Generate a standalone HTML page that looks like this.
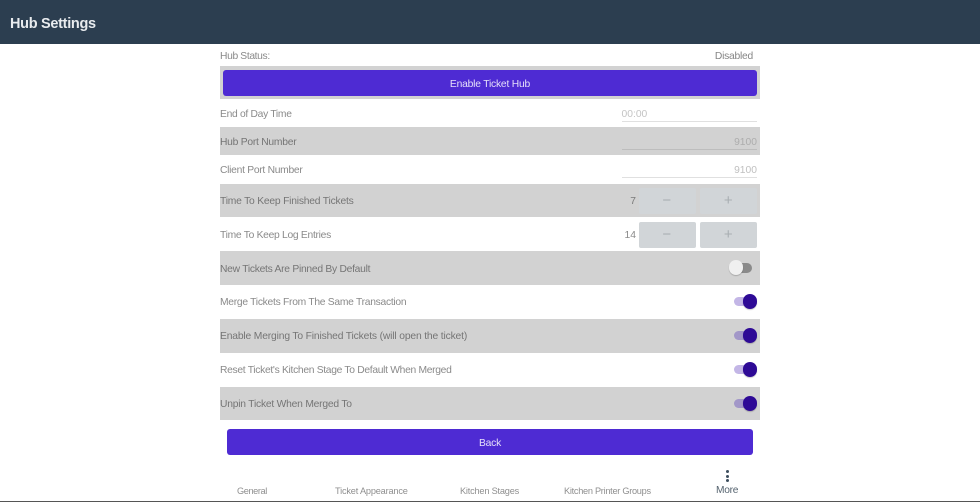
<!DOCTYPE html>
<html><head><meta charset="utf-8">
<style>
html,body{margin:0;padding:0;width:980px;height:502px;overflow:hidden;background:#fff}
body{position:relative;font-family:"Liberation Sans",sans-serif}
#w{position:absolute;left:0;top:0;width:980px;height:502px;filter:blur(.35px)}
#w div{position:absolute;box-sizing:border-box}
.hd{left:0;top:0;width:980px;height:44.3px;background:#2c3e50}
.ttl{left:10px;top:15.2px;font-size:14.5px;line-height:18px;font-weight:bold;color:#e8ebee;letter-spacing:-.3px;white-space:nowrap}
.g{left:219.5px;width:540px;background:#d2d2d2}
.t{font-size:10.3px;line-height:14px;color:#8a8a8a;white-space:nowrap;left:220px;margin-top:1px;letter-spacing:-.27px}
.gt{color:#757575}
.r{text-align:right;white-space:nowrap;font-size:10.3px;line-height:14px;margin-top:1px}
.btn{background:#4e2bd3;border-radius:3px;color:#e6e0fa;text-align:center;font-size:10.3px;letter-spacing:-.2px}
.ln{height:1px;background:#e0e0e0;left:621.5px;width:135.5px}
.st{background:#d1d5d8;border-radius:2px;width:57px;height:26px;top:0}
.sym{color:#a9aeb2;font-size:15px;line-height:26px;text-align:center;width:56.5px;height:26px}
.tr{width:18px;height:9.5px;border-radius:5px;left:734px}
.k{width:14.5px;height:14.5px;border-radius:50%;left:742.5px;background:#2e0a96;box-shadow:0 1px 1px rgba(0,0,0,.2)}
.tab{font-size:9.2px;line-height:12px;color:#8f8f8f;top:485px;white-space:nowrap;letter-spacing:-.22px}
</style></head><body><div id="w">
<div class="hd"></div>
<div class="ttl">Hub Settings</div>

<div class="t" style="top:49px;letter-spacing:-.36px">Hub Status:</div>
<div class="r" style="top:49px;left:653px;width:100px;color:#858585;letter-spacing:-.25px">Disabled</div>

<div class="g" style="top:66px;height:33px"></div>
<div class="btn" style="left:223px;top:69.5px;width:534px;height:26.5px;line-height:29.5px">Enable Ticket Hub</div>

<div class="t" style="top:107px;letter-spacing:-.3px">End of Day Time</div>
<div class="r" style="top:106.5px;left:621.5px;width:40px;text-align:left;color:#c4c4c4">00:00</div>
<div class="ln" style="top:121px"></div>

<div class="g" style="top:127px;height:28px"></div>
<div class="t gt" style="top:135px;letter-spacing:-.25px">Hub Port Number</div>
<div class="r" style="top:135px;left:657px;width:100px;color:#adadad">9100</div>
<div class="ln" style="top:149px;background:#bdbdbd"></div>

<div class="t" style="top:163px;letter-spacing:-.28px">Client Port Number</div>
<div class="r" style="top:163px;left:657px;width:100px;color:#c0c0c0">9100</div>
<div class="ln" style="top:177px"></div>

<div class="g" style="top:183.5px;height:33.5px"></div>
<div class="t gt" style="top:194px;letter-spacing:-.21px">Time To Keep Finished Tickets</div>
<div class="r" style="top:194px;left:596px;width:40px;color:#7a7a7a">7</div>
<div class="st" style="left:638.5px;top:188px"></div><div class="sym" style="left:638.5px;top:188px">−</div>
<div class="st" style="left:700px;top:188px"></div><div class="sym" style="left:700px;top:188px">+</div>

<div class="t" style="top:228px;letter-spacing:-.29px">Time To Keep Log Entries</div>
<div class="r" style="top:228px;left:596px;width:40px;color:#8a8a8a">14</div>
<div class="st" style="left:638.5px;top:221.5px"></div><div class="sym" style="left:638.5px;top:222px">−</div>
<div class="st" style="left:700px;top:221.5px"></div><div class="sym" style="left:700px;top:222px">+</div>

<div class="g" style="top:251px;height:34px"></div>
<div class="t gt" style="top:261.5px">New Tickets Are Pinned By Default</div>
<div class="tr" style="top:263px;left:735px;width:17px;background:#8a8a8a"></div>
<div class="k" style="top:260px;left:728.5px;background:#f0f0f0"></div>

<div class="t" style="top:295px;letter-spacing:-.28px">Merge Tickets From The Same Transaction</div>
<div class="tr" style="top:296.5px;background:#c3b6e6"></div>
<div class="k" style="top:294px"></div>

<div class="g" style="top:319px;height:33.5px"></div>
<div class="t gt" style="top:329px;letter-spacing:-.16px">Enable Merging To Finished Tickets (will open the ticket)</div>
<div class="tr" style="top:330.5px;background:#a297c8"></div>
<div class="k" style="top:328px"></div>

<div class="t" style="top:363px;letter-spacing:-.31px">Reset Ticket's Kitchen Stage To Default When Merged</div>
<div class="tr" style="top:364.5px;background:#c3b6e6"></div>
<div class="k" style="top:362px"></div>

<div class="g" style="top:386.5px;height:33.5px"></div>
<div class="t gt" style="top:397px;letter-spacing:-.22px">Unpin Ticket When Merged To</div>
<div class="tr" style="top:398.5px;background:#a297c8"></div>
<div class="k" style="top:396px"></div>

<div class="btn" style="left:227px;top:429px;width:526px;height:26px;line-height:29.5px">Back</div>

<div class="tab" style="left:237px;letter-spacing:-.4px">General</div>
<div class="tab" style="left:335px;letter-spacing:-.18px">Ticket Appearance</div>
<div class="tab" style="left:460px;letter-spacing:-.2px">Kitchen Stages</div>
<div class="tab" style="left:564px;letter-spacing:-.28px">Kitchen Printer Groups</div>
<div style="left:725.5px;top:470px;width:3px;height:3px;border-radius:50%;background:#3d4e5e"></div>
<div style="left:725.5px;top:474.5px;width:3px;height:3px;border-radius:50%;background:#3d4e5e"></div>
<div style="left:725.5px;top:479px;width:3px;height:3px;border-radius:50%;background:#3d4e5e"></div>
<div class="tab" style="left:716px;top:485px;font-size:10.2px;color:#55636f;letter-spacing:-.25px">More</div>
<div style="left:0;top:501px;width:980px;height:1px;background:#555"></div>
</div></body></html>
